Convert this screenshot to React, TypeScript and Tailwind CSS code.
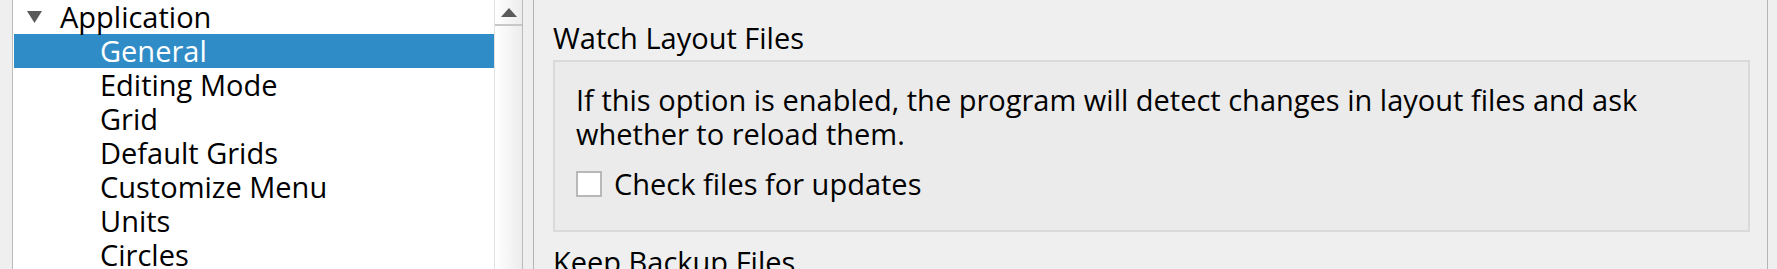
import React from "react";

const items = [
  "General",
  "Editing Mode",
  "Grid",
  "Default Grids",
  "Customize Menu",
  "Units",
  "Circles",
];

const font = { fontFamily: '"Open Sans", "Noto Sans", sans-serif' };

const App = () => {
  return (
    <div
      className="w-[1777px] h-[269px] bg-[#efefef] flex overflow-hidden text-[29px] leading-[34px] text-black"
      style={font}
    >
      <div className="w-[12px] shrink-0" />
      {/* tree panel */}
      <div className="w-[511px] shrink-0 flex border-l border-r border-[#bcbcbc] bg-white">
        <div className="flex-1 pl-px">
          <div className="h-[34px] flex items-center">
            <svg width="15" height="12" viewBox="0 0 15 12" className="ml-[13px] mr-[18px]">
              <polygon points="0,0 15,0 7.5,12" fill="#5a5a5a" />
            </svg>
            <span>Application</span>
          </div>
          {items.map((item, i) => (
            <div
              key={item}
              className={
                i === 0
                  ? "h-[34px] flex items-center pl-[86px] bg-[#308cc6] text-white"
                  : "h-[34px] flex items-center pl-[86px]"
              }
            >
              {item}
            </div>
          ))}
        </div>
        <div className="w-[28px] border-l border-[#e2e2e2] bg-gradient-to-r from-white to-[#ececec]">
          <div className="h-[26px] border-b-2 border-[#c8c8c8] flex items-center justify-center">
            <svg width="16" height="9" viewBox="0 0 16 9">
              <polygon points="8,0 16,9 0,9" fill="#5a5a5a" />
            </svg>
          </div>
        </div>
      </div>
      <div className="w-[10px] shrink-0" />
      {/* settings pane */}
      <div className="w-[1235px] shrink-0 border-l border-r border-[#b4b4b4] pl-[19px] pr-[17px]">
        <div className="h-[60px] pt-[21px]">Watch Layout Files</div>
        <div className="h-[172px] border-2 border-[#dadada] bg-[#ebebeb] pl-[21px] pt-[21px]">
          <p className="whitespace-nowrap">
            If this option is enabled, the program will detect changes in layout files and ask
            <br />
            whether to reload them.
          </p>
          <label className="flex items-center h-[34px] mt-[16px]">
            <span className="w-[26px] h-[26px] border-2 border-[#b8b8b8] bg-white mr-[12px]" />
            <span>Check files for updates</span>
          </label>
        </div>
        <div className="pt-[13px]">Keep Backup Files</div>
      </div>
    </div>
  );
};

export default App;
